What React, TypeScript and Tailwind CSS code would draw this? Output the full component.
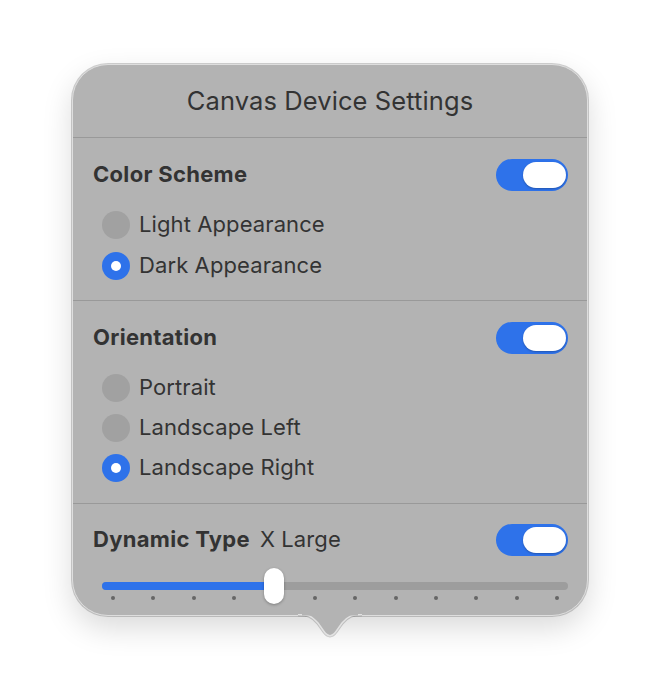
import React from "react";

const font = { fontFamily: "Inter, 'Noto Sans', sans-serif" };

function Toggle() {
  return (
    <div className="flex h-8 w-[72px] items-center justify-end rounded-full bg-[#2e72ea] pr-[2px]">
      <div className="h-[26px] w-[43px] rounded-full bg-white shadow-[0_1px_2px_rgba(0,0,0,0.25)]" />
    </div>
  );
}

function Radio({ label, checked }: { label: string; checked?: boolean }) {
  return (
    <div className="flex h-7 items-center gap-[9px] pl-[9px]">
      {checked ? (
        <div className="flex h-7 w-7 items-center justify-center rounded-full bg-[#2e72ea]">
          <div className="h-[10px] w-[10px] rounded-full bg-white" />
        </div>
      ) : (
        <div className="h-7 w-7 rounded-full bg-[#a1a1a1]" />
      )}
      <span className="-translate-y-px text-[22px] tracking-[0.1px] text-[#333]">{label}</span>
    </div>
  );
}

function SectionHeader({ title, value }: { title: string; value?: string }) {
  return (
    <div className="flex h-8 items-center justify-between">
      <div className="flex -translate-y-px items-baseline gap-[10px]">
        <span className="text-[22px] font-bold tracking-[0.3px] text-[#333]">{title}</span>
        {value && <span className="text-[22px] tracking-[0.1px] text-[#333]">{value}</span>}
      </div>
      <Toggle />
    </div>
  );
}

const ticks = Array.from({ length: 12 }, (_, i) => i);

export default function App() {
  return (
    <div className="min-h-[696px] w-[660px] bg-white pl-[72px] pt-[64px]" style={font}>
      <div className="relative w-[516px]">
        <div className="relative z-10 h-[552px] rounded-[36px] border border-[#dedede] bg-[#b3b3b3] shadow-[0_0_0_1px_rgba(0,0,0,0.18),0_12px_30px_rgba(0,0,0,0.15)]">
          <div className="flex h-[72px] items-center justify-center">
            <span className="text-[25.5px] tracking-[0.1px] text-[#333]">Canvas Device Settings</span>
          </div>
          <div className="h-px bg-[#999]" />

          <div className="pl-[20px] pr-[19px] pt-[21px] pb-[20px]">
            <SectionHeader title="Color Scheme" />
            <div className="mt-5 flex flex-col gap-[13px]">
              <Radio label="Light Appearance" />
              <Radio label="Dark Appearance" checked />
            </div>
          </div>
          <div className="h-px bg-[#999]" />

          <div className="pl-[20px] pr-[19px] pt-[21px] pb-[21px]">
            <SectionHeader title="Orientation" />
            <div className="mt-5 flex flex-col gap-3">
              <Radio label="Portrait" />
              <Radio label="Landscape Left" />
              <Radio label="Landscape Right" checked />
            </div>
          </div>
          <div className="h-px bg-[#999]" />

          <div className="pl-[20px] pr-[19px] pt-[20px]">
            <SectionHeader title="Dynamic Type" value="X Large" />
            <div className="relative ml-[9px] mt-3 h-9">
              <div className="absolute left-0 right-0 top-[14px] h-2 rounded-full bg-[#9d9d9d]" />
              <div className="absolute left-0 top-[14px] h-2 w-[172px] rounded-full bg-[#2e72ea]" />
              <div className="absolute left-[9px] right-[9px] top-[28px] flex justify-between">
                {ticks.map((i) => (
                  <div key={i} className="h-1 w-1 rounded-full bg-[#666]" />
                ))}
              </div>
              <div className="absolute left-[162px] top-0 h-9 w-5 rounded-[10px] bg-white shadow-[0_1px_3px_rgba(0,0,0,0.3)]" />
            </div>
          </div>
        </div>
        <svg
          className="absolute left-[226px] top-[548px] z-20"
          width="64"
          height="30"
          viewBox="0 0 64 30"
        >
          <path
            d="M0 2.5 C10 2.5 14 4 20 11 L26 19.5 C30 25 34 25 38 19.5 L44 11 C50 4 54 2.5 64 2.5"
            fill="none"
            stroke="rgba(0,0,0,0.18)"
            strokeWidth="3.5"
          />
          <path
            d="M0 2.5 C10 2.5 14 4 20 11 L26 19.5 C30 25 34 25 38 19.5 L44 11 C50 4 54 2.5 64 2.5"
            fill="#b3b3b3"
            stroke="#e2e2e2"
            strokeWidth="1.5"
          />
          <path d="M0 0 H64 V2 H0 Z" fill="#b3b3b3" />
          <path d="M4 0 H60 V3.5 H4 Z" fill="#b3b3b3" />
        </svg>
      </div>
    </div>
  );
}
